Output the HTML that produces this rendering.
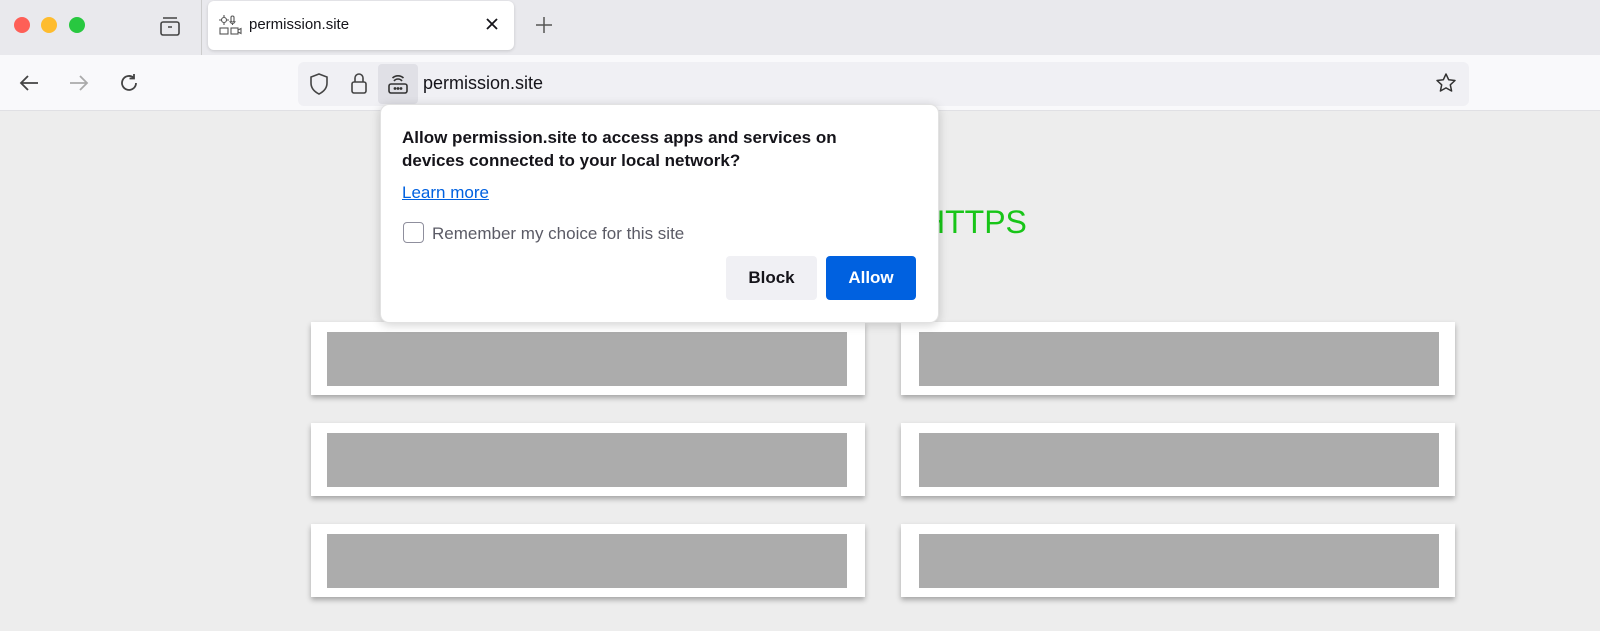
<!DOCTYPE html>
<html><head><style>
*{margin:0;padding:0;box-sizing:border-box}
body{width:1600px;height:631px;overflow:hidden;background:#ededed;font-family:"Liberation Sans",sans-serif;position:relative}
.abs{position:absolute}
#tabs{left:0;top:0;width:1600px;height:55px;background:#e9e9ed}
#tool{left:0;top:55px;width:1600px;height:56px;background:#f9f9fb;border-bottom:1px solid #e0e0e4}
.dot{top:17px;width:16px;height:16px;border-radius:50%}
.card{width:554px;height:73px;background:#fff;box-shadow:0 3px 5px rgba(0,0,0,.3)}
.card div{position:absolute;left:16px;top:10px;width:520px;height:54px;background:#acacac}
</style></head><body>
<div id="tabs" class="abs"></div>
<div class="abs dot" style="left:14px;background:#fe5f57"></div>
<div class="abs dot" style="left:41px;background:#febc2e"></div>
<div class="abs dot" style="left:69px;background:#28c840"></div>
<svg class="abs" style="left:158px;top:14px" width="24" height="24" viewBox="0 0 24 24" fill="none" stroke="#444" stroke-width="1.6"><rect x="3" y="8" width="18" height="13" rx="2"/><path d="M5 4h14M10 13h4"/></svg>
<div class="abs" style="left:201px;top:0;width:1px;height:55px;background:#ccc"></div>
<div class="abs" style="left:208px;top:1px;width:306px;height:49px;background:#fff;border-radius:6px;box-shadow:0 1px 3px rgba(0,0,0,.15)"></div>
<svg class="abs" style="left:219px;top:15px" width="24" height="22" viewBox="0 0 24 22" fill="none" stroke="#555" stroke-width="1.1"><circle cx="5" cy="5" r="2.5"/><path d="M5 0v2M5 8v2M0 5h2M8 5h2"/><rect x="12" y="1" width="3" height="6" rx="1.5"/><path d="M11 6a2.5 2.5 0 0 0 5 0M13.5 9v1"/><rect x="1" y="13" width="8" height="6"/><rect x="12" y="13" width="7" height="6"/><path d="M19 15l3-1.5v5l-3-1.5"/></svg>
<div class="abs" style="left:249px;top:16px;font-size:15px;color:#15141a">permission.site</div>
<svg class="abs" style="left:485px;top:17px" width="14" height="14" viewBox="0 0 14 14" stroke="#15141a" stroke-width="1.8"><path d="M2 2l10 10M12 2L2 12"/></svg>
<svg class="abs" style="left:535px;top:16px" width="18" height="18" viewBox="0 0 18 18" stroke="#555" stroke-width="1.5"><path d="M9 1v16M1 9h16"/></svg>
<div id="tool" class="abs"></div>
<svg class="abs" style="left:18px;top:72px" width="22" height="22" viewBox="0 0 22 22" fill="none" stroke="#444" stroke-width="1.8"><path d="M20 11H3M10 4l-7 7 7 7"/></svg>
<svg class="abs" style="left:68px;top:72px" width="22" height="22" viewBox="0 0 22 22" fill="none" stroke="#aaa" stroke-width="1.8"><path d="M2 11h17M12 4l7 7-7 7"/></svg>
<svg class="abs" style="left:118px;top:72px" width="22" height="22" viewBox="0 0 22 22" fill="none" stroke="#444" stroke-width="1.8"><path d="M18 11a7 7 0 1 1-2.5-5.4"/><path d="M16 2v4.5h-4.5"/></svg>
<div class="abs" style="left:298px;top:62px;width:1171px;height:44px;background:#f0f0f4;border-radius:6px"></div>
<svg class="abs" style="left:308px;top:72px" width="22" height="24" viewBox="0 0 22 24" fill="none" stroke="#444" stroke-width="1.6"><path d="M11 2l8 3v6c0 6-4 9-8 11-4-2-8-5-8-11V5z"/></svg>
<svg class="abs" style="left:348px;top:71px" width="22" height="24" viewBox="0 0 22 24" fill="none" stroke="#444" stroke-width="1.6"><rect x="4" y="11" width="14" height="11" rx="2"/><path d="M7 11V7a4 4 0 0 1 8 0v4"/></svg>
<div class="abs" style="left:378px;top:64px;width:40px;height:40px;background:#e0e0e6;border-radius:4px"></div>
<svg class="abs" style="left:386px;top:72px" width="24" height="24" viewBox="0 0 24 24" fill="none" stroke="#333" stroke-width="1.6"><rect x="3" y="12" width="18" height="9" rx="2"/><path d="M8 9a5 5 0 0 1 8 0M6.5 6a8 8 0 0 1 11 0"/><circle cx="9" cy="16.5" r=".6" fill="#333"/><circle cx="12" cy="16.5" r=".6" fill="#333"/><circle cx="15" cy="16.5" r=".6" fill="#333"/></svg>
<div class="abs" style="left:423px;top:73px;font-size:18px;color:#15141a">permission.site</div>
<svg class="abs" style="left:1435px;top:72px" width="22" height="22" viewBox="0 0 22 22" fill="none" stroke="#333" stroke-width="1.5" stroke-linejoin="round"><path d="M11 2l2.7 5.8 6.3.7-4.7 4.3 1.3 6.2L11 15.9 5.4 19l1.3-6.2L2 8.5l6.3-.7z"/></svg>

<div class="abs" style="left:922px;top:204px;font-size:32px;color:#18c518;font-family:'Liberation Sans',sans-serif">HTTPS</div>

<div class="abs card" style="left:311px;top:322px"><div></div></div>
<div class="abs card" style="left:901px;top:322px"><div style="left:18px"></div></div>
<div class="abs card" style="left:311px;top:423px"><div></div></div>
<div class="abs card" style="left:901px;top:423px"><div style="left:18px"></div></div>
<div class="abs card" style="left:311px;top:524px"><div></div></div>
<div class="abs card" style="left:901px;top:524px"><div style="left:18px"></div></div>

<div class="abs" style="left:380px;top:104px;width:559px;height:219px;background:#fff;border-radius:9px;box-shadow:0 2px 10px rgba(0,0,0,.18);border:1px solid #e2e2e2"></div>
<div class="abs" style="left:402px;top:126px;font-size:17px;font-weight:bold;color:#15141a;line-height:23px;width:520px;white-space:nowrap">Allow permission.site to access apps and services on<br>devices connected to your local network?</div>
<div class="abs" style="left:402px;top:183px;font-size:17px;color:#0061e0;text-decoration:underline">Learn more</div>
<div class="abs" style="left:403px;top:222px;width:21px;height:21px;border:1.5px solid #8f8f9d;border-radius:4px"></div>
<div class="abs" style="left:432px;top:224px;font-size:17px;color:#5b5b66">Remember my choice for this site</div>
<div class="abs" style="left:726px;top:256px;width:91px;height:44px;background:#f0f0f4;border-radius:4px;font-size:17px;font-weight:bold;color:#15141a;text-align:center;line-height:44px">Block</div>
<div class="abs" style="left:826px;top:256px;width:90px;height:44px;background:#0061e0;border-radius:4px;font-size:17px;font-weight:bold;color:#fff;text-align:center;line-height:44px">Allow</div>
</body></html>
